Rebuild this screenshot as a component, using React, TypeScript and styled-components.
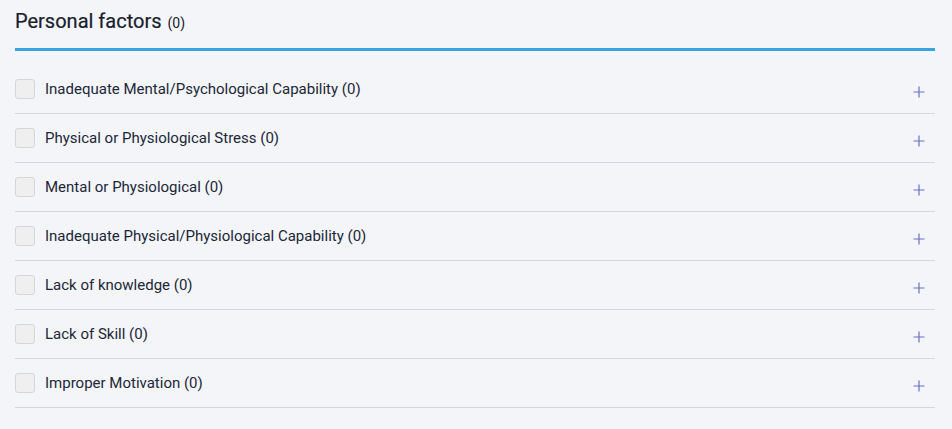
import styled, { createGlobalStyle } from "styled-components";

const Global = createGlobalStyle`
  body {
    margin: 0;
    background: #f3f5f9;
    font-family: Roboto, "Liberation Sans", sans-serif;
  }
`;

const Panel = styled.section`
  margin: 0 17px 0 15px;
`;

const Header = styled.div`
  display: flex;
  align-items: baseline;
  gap: 6px;
  padding: 8px 0 14px;
  border-bottom: 3px solid #35a4e0;
`;

const Title = styled.h2`
  margin: 0;
  font-size: 20px;
  font-weight: 400;
  line-height: 26px;
  color: #18202e;
  -webkit-text-stroke: 0.2px #18202e;
`;

const Count = styled.span`
  font-size: 14px;
  color: #18202e;
`;

const List = styled.ul`
  list-style: none;
  margin: 0;
  padding: 14px 0 0;
`;

const Row = styled.li`
  display: flex;
  align-items: center;
  height: 48px;
  border-bottom: 1px solid #d3d6e2;
`;

const Box = styled.span`
  width: 18px;
  height: 18px;
  flex: none;
  border: 1px solid #d6d6d8;
  border-radius: 3px;
  background: #efefef;
`;

const Label = styled.span`
  flex: 1;
  margin-left: 10px;
  font-size: 15px;
  color: #1c2738;
`;

const Plus = styled.svg`
  flex: none;
  margin: 6px 10px 0 0;
`;

const items = [
  "Inadequate Mental/Psychological Capability",
  "Physical or Physiological Stress",
  "Mental or Physiological",
  "Inadequate Physical/Physiological Capability",
  "Lack of knowledge",
  "Lack of Skill",
  "Improper Motivation",
];

export default function App() {
  return (
    <>
      <Global />
      <Panel>
        <Header>
          <Title>Personal factors</Title>
          <Count>(0)</Count>
        </Header>
        <List>
          {items.map((name) => (
            <Row key={name}>
              <Box />
              <Label>{name} (0)</Label>
              <Plus width="12" height="12" viewBox="0 0 12 12">
                <path d="M6 0.5v11M0.5 6h11" stroke="#6a70c6" strokeWidth="1.2" />
              </Plus>
            </Row>
          ))}
        </List>
      </Panel>
    </>
  );
}
